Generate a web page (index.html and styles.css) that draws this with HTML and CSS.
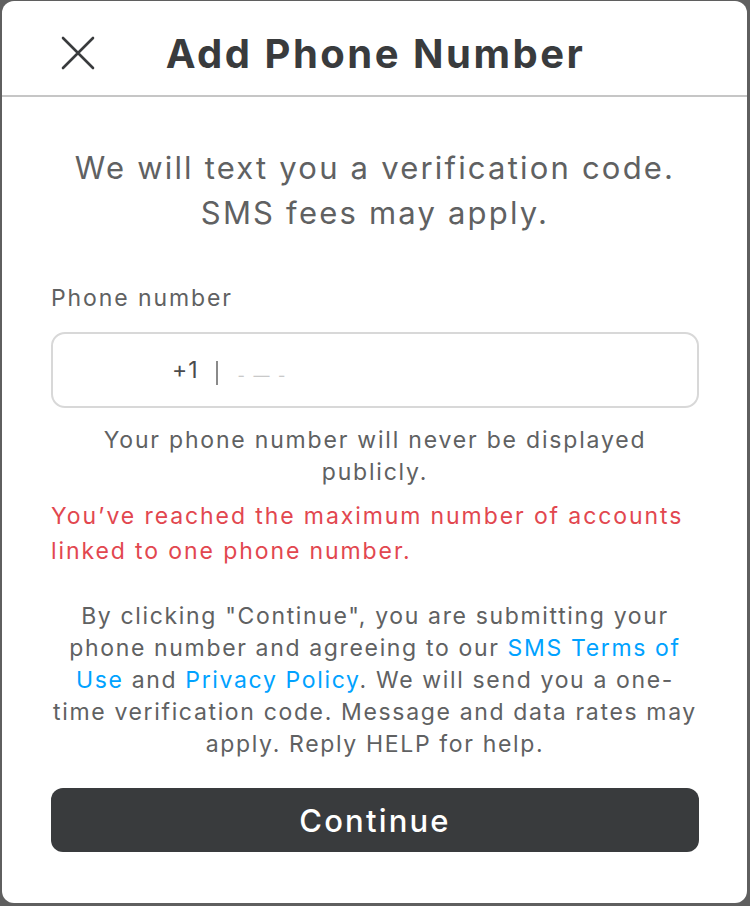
FILE: index.html
```html
<!DOCTYPE html>
<html lang="en">
<head>
<meta charset="utf-8">
<title>Add Phone Number</title>
<link rel="stylesheet" href="styles.css">
</head>
<body>
<div class="page">
  <div class="modal">
    <div class="header">
      <button class="close" aria-label="Close">
        <svg width="34" height="34" viewBox="0 0 34 34"><path d="M2 2 L32 32 M32 2 L2 32" stroke="#393b3d" stroke-width="2.6" fill="none" stroke-linecap="round"/></svg>
      </button>
      <h1 class="title">Add Phone Number</h1>
    </div>
    <div class="body">
      <p class="subtitle">We will text you a verification code.<br>SMS fees may apply.</p>
      <label class="label">Phone number</label>
      <div class="input">
        <span class="code">+1</span>
        <span class="caret"></span>
        <span class="redacted">- — -</span>
      </div>
      <p class="helper">Your phone number will never be displayed<br>publicly.</p>
      <p class="error">You’ve reached the maximum number of accounts<br>linked to one phone number.</p>
      <p class="terms">By clicking "Continue", you are submitting your<br>phone number and agreeing to our <a class="link" href="#">SMS Terms of<br>Use</a> and <a class="link" href="#">Privacy Policy</a>. We will send you a one-<br>time verification code. Message and data rates may<br>apply. Reply HELP for help.</p>
      <button class="continue">Continue</button>
    </div>
  </div>
</div>
</body>
</html>
```
FILE: styles.css
```css
html, body {
  margin: 0;
  padding: 0;
}
body {
  background: #5f5f5f;
  font-family: Inter, "Open Sans", sans-serif;
}
.page {
  box-sizing: border-box;
  height: 906px;
  padding: 1px 3px 3px 2px;
  display: flex;
}
.modal {
  flex: 1;
  background: #ffffff;
  border-radius: 12px;
  display: flex;
  flex-direction: column;
}
.header {
  position: relative;
  height: 94px;
  border-bottom: 2px solid #c6c6c6;
  display: flex;
  align-items: center;
  justify-content: center;
}
.close {
  position: absolute;
  left: 59px;
  top: 35px;
  width: 34px;
  height: 34px;
  padding: 0;
  border: 0;
  background: none;
}
.close svg {
  display: block;
}
.title {
  margin: 11px 0 0 2px;
  font-size: 40px;
  font-weight: 700;
  color: #393b3d;
  letter-spacing: 2.5px;
}
.body {
  padding: 0 48px 0 49px;
  display: flex;
  flex-direction: column;
}
.subtitle {
  margin: 48px 0 0;
  font-size: 31px;
  line-height: 45px;
  color: #606162;
  text-align: center;
  letter-spacing: 2.2px;
}
.label {
  margin-top: 48px;
  font-size: 23px;
  line-height: 30px;
  color: #606162;
  letter-spacing: 1.9px;
}
.input {
  margin-top: 19px;
  box-sizing: border-box;
  height: 76px;
  border: 2px solid #d8d8d8;
  border-radius: 14px;
  display: flex;
  align-items: center;
  padding-left: 119px;
}
.code {
  font-size: 23px;
  color: #4a4b4d;
  letter-spacing: 1px;
}
.caret {
  width: 2px;
  height: 24px;
  margin-left: 17px;
  margin-top: 6px;
  background: #8a8a8a;
}
.redacted {
  margin-left: 20px;
  margin-top: 10px;
  font-size: 16px;
  color: #c9c9c9;
  letter-spacing: 2px;
}
.helper {
  margin: 16px 0 0;
  font-size: 23px;
  line-height: 32px;
  color: #606162;
  text-align: center;
  letter-spacing: 1.8px;
}
.error {
  margin: 11px 0 0;
  font-size: 23px;
  line-height: 35px;
  color: #e2474f;
  letter-spacing: 1.9px;
}
.terms {
  margin: 31px 0 0;
  font-size: 23px;
  line-height: 32px;
  color: #606162;
  text-align: center;
  letter-spacing: 1.65px;
}
.link {
  color: #00a2ff;
  text-decoration: none;
}
.continue {
  margin-top: 28px;
  height: 64px;
  border: 0;
  border-radius: 12px;
  background: #393b3d;
  color: #ffffff;
  font-family: Inter, "Open Sans", sans-serif;
  font-size: 31px;
  font-weight: 500;
  letter-spacing: 2.2px;
}
```
